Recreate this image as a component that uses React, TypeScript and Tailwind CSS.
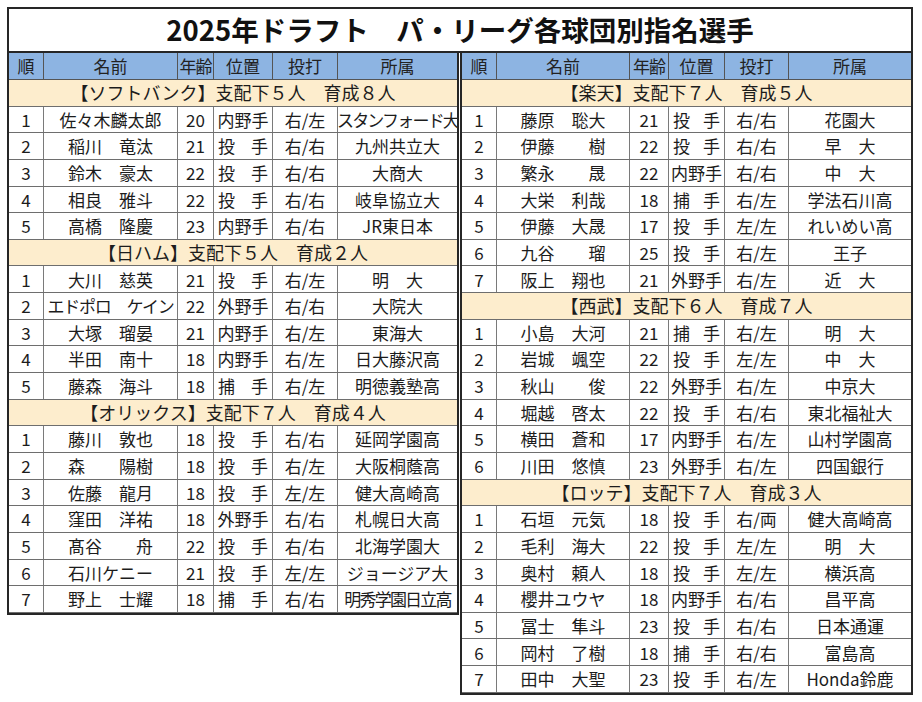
import React from 'react';

type Row = [string, string, string, string, string, string, string?];

type Team = {
  title: string;
  rows: Row[];
};

const leftTeams: Team[] = [
  {
    title: '【ソフトバンク】支配下５人　育成８人',
    rows: [
      ['1', '佐々木麟太郎', '20', '内野手', '右/左', 'スタンフォード大', 'shop'],
      ['2', '稲川　竜汰', '21', '投手', '右/右', '九州共立大'],
      ['3', '鈴木　豪太', '22', '投手', '右/右', '大商大'],
      ['4', '相良　雅斗', '22', '投手', '右/右', '岐阜協立大'],
      ['5', '高橋　隆慶', '23', '内野手', '右/右', 'JR東日本'],
    ],
  },
  {
    title: '【日ハム】支配下５人　育成２人',
    rows: [
      ['1', '大川　慈英', '21', '投手', '右/左', '明　大'],
      ['2', 'エドポロ　ケイン', '22', '外野手', '右/右', '大院大', 'name'],
      ['3', '大塚　瑠晏', '21', '内野手', '右/左', '東海大'],
      ['4', '半田　南十', '18', '内野手', '右/左', '日大藤沢高'],
      ['5', '藤森　海斗', '18', '捕手', '右/左', '明徳義塾高'],
    ],
  },
  {
    title: '【オリックス】支配下７人　育成４人',
    rows: [
      ['1', '藤川　敦也', '18', '投手', '右/右', '延岡学園高'],
      ['2', '森　　陽樹', '18', '投手', '右/左', '大阪桐蔭高'],
      ['3', '佐藤　龍月', '18', '投手', '左/左', '健大高崎高'],
      ['4', '窪田　洋祐', '18', '外野手', '右/右', '札幌日大高'],
      ['5', '髙谷　　舟', '22', '投手', '右/右', '北海学園大'],
      ['6', '石川ケニー', '21', '投手', '左/左', 'ジョージア大'],
      ['7', '野上　士耀', '18', '捕手', '右/右', '明秀学園日立高', 'shop'],
    ],
  },
];

const rightTeams: Team[] = [
  {
    title: '【楽天】支配下７人　育成５人',
    rows: [
      ['1', '藤原　聡大', '21', '投手', '右/右', '花園大'],
      ['2', '伊藤　　樹', '22', '投手', '右/右', '早　大'],
      ['3', '繁永　　晟', '22', '内野手', '右/右', '中　大'],
      ['4', '大栄　利哉', '18', '捕手', '右/左', '学法石川高'],
      ['5', '伊藤　大晟', '17', '投手', '左/左', 'れいめい高'],
      ['6', '九谷　　瑠', '25', '投手', '右/左', '王子'],
      ['7', '阪上　翔也', '21', '外野手', '右/左', '近　大'],
    ],
  },
  {
    title: '【西武】支配下６人　育成７人',
    rows: [
      ['1', '小島　大河', '21', '捕手', '右/左', '明　大'],
      ['2', '岩城　颯空', '22', '投手', '左/左', '中　大'],
      ['3', '秋山　　俊', '22', '外野手', '右/左', '中京大'],
      ['4', '堀越　啓太', '22', '投手', '右/右', '東北福祉大'],
      ['5', '横田　蒼和', '17', '内野手', '右/左', '山村学園高'],
      ['6', '川田　悠慎', '23', '外野手', '右/左', '四国銀行'],
    ],
  },
  {
    title: '【ロッテ】支配下７人　育成３人',
    rows: [
      ['1', '石垣　元気', '18', '投手', '右/両', '健大高崎高'],
      ['2', '毛利　海大', '22', '投手', '左/左', '明　大'],
      ['3', '奥村　頼人', '18', '投手', '左/左', '横浜高'],
      ['4', '櫻井ユウヤ', '18', '内野手', '右/右', '昌平高'],
      ['5', '冨士　隼斗', '23', '投手', '右/右', '日本通運'],
      ['6', '岡村　了樹', '18', '捕手', '右/右', '富島高'],
      ['7', '田中　大聖', '23', '投手', '右/左', 'Honda鈴鹿'],
    ],
  },
];

const headers = ['順', '名前', '年齢', '位置', '投打', '所属'];

const cell = 'flex items-center justify-center border-r border-[#7a7a7a] whitespace-nowrap overflow-hidden';

function DataRow({ row, cols }: { row: Row; cols: string }) {
  const [no, name, age, pos, hand, team, tight] = row;
  return (
    <div className={`grid ${cols} h-[26.65px] border-b border-[#6e6e6e] bg-white text-[17px] text-[#1c1c1c]`}>
      <div className={cell}>{no}</div>
      <div className={`${cell} ${tight === 'name' ? 'tracking-[-1.2px]' : ''}`}>{name}</div>
      <div className={cell}>{age}</div>
      {pos.length === 2 ? (
        <div className={`${cell} !justify-between px-[4px]`}>
          <span>{pos[0]}</span>
          <span>{pos[1]}</span>
        </div>
      ) : (
        <div className={cell}>{pos}</div>
      )}
      <div className={cell}>{hand}</div>
      <div
        className={`flex items-center justify-center whitespace-nowrap overflow-hidden ${
          tight === 'shop' ? 'tracking-[-1.8px]' : ''
        }`}
      >
        {team}
      </div>
    </div>
  );
}

function Table({ teams, cols, className }: { teams: Team[]; cols: string; className: string }) {
  return (
    <div className={`border-2 border-t-0 border-[#262626] ${className}`}>
      <div className={`grid ${cols} h-[27px] border-b border-[#555] bg-[#8db4e2] text-[17px] text-[#222]`}>
        {headers.map((h, i) => (
          <div
            key={h}
            className={`flex items-center justify-center ${i < 5 ? 'border-r border-[#555]' : ''} ${
              i === 2 ? 'tracking-[-1px]' : ''
            }`}
          >
            {h}
          </div>
        ))}
      </div>
      {teams.map((t) => (
        <div key={t.title}>
          <div className="flex h-[26.65px] items-center justify-center border-b border-[#6e6e6e] bg-[#fdedcd] text-[18px] text-[#1c1c1c]">
            {t.title}
          </div>
          {t.rows.map((r) => (
            <DataRow key={t.title + r[0]} row={r} cols={cols} />
          ))}
        </div>
      ))}
    </div>
  );
}

export default function App() {
  return (
    <div
      className="min-h-[702px] w-[922px] bg-white pl-[7px] pt-[7px]"
      style={{ fontFamily: '"Noto Sans CJK JP", "Noto Sans", sans-serif' }}
    >
      <div className="w-[906px]">
        <div className="flex h-[46px] items-center justify-center border-2 border-[#262626] text-[27.5px] font-bold text-[#111]">
          2025年ドラフト　パ・リーグ各球団別指名選手
        </div>
        <div className="flex items-start gap-px">
          <Table teams={leftTeams} cols="grid-cols-[35px_134px_36px_59px_65px_119px]" className="w-[452px]" />
          <Table teams={rightTeams} cols="grid-cols-[35px_133px_39px_56px_64px_122px]" className="w-[453px]" />
        </div>
      </div>
    </div>
  );
}
